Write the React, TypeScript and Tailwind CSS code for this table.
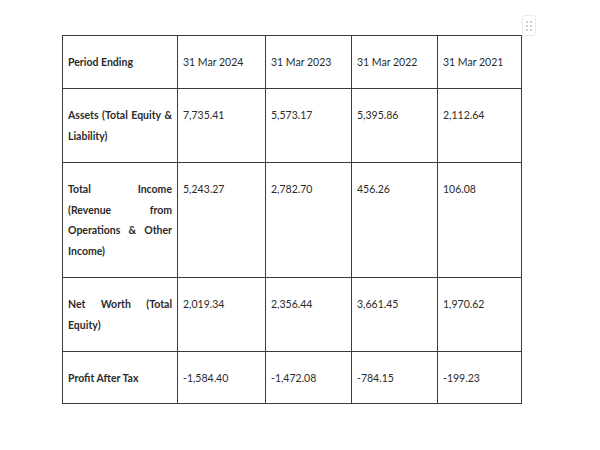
import React from "react";

type Row = { label: string; values: string[]; h: string };

const rows: Row[] = [
  { label: "Assets (Total Equity & Liability)", values: ["7,735.41", "5,573.17", "5,395.86", "2,112.64"], h: "h-[74px]" },
  {
    label: "Total Income (Revenue from Operations & Other Income)",
    values: ["5,243.27", "2,782.70", "456.26", "106.08"],
    h: "h-[115px]",
  },
  { label: "Net Worth (Total Equity)", values: ["2,019.34", "2,356.44", "3,661.45", "1,970.62"], h: "h-[74px]" },
  { label: "Profit After Tax", values: ["-1,584.40", "-1,472.08", "-784.15", "-199.23"], h: "h-[52px]" },
];

const headers = ["31 Mar 2024", "31 Mar 2023", "31 Mar 2022", "31 Mar 2021"];

function DragHandle() {
  return (
    <div className="absolute left-[522px] top-[15px] grid h-[21px] w-[14px] place-items-center rounded-[3px] border border-[#ececec] bg-white">
      <div className="grid grid-cols-2 gap-x-[2px] gap-y-[2px]">
        {Array.from({ length: 6 }).map((_, i) => (
          <span key={i} className="block h-[2px] w-[2px] rounded-full bg-[#bdbdbd]" />
        ))}
      </div>
    </div>
  );
}

export default function App() {
  const cell = "border border-[#3c3c3c] align-top px-[5px] pt-[16px] leading-[20.5px]";
  return (
    <div className="relative h-[450px] w-[600px] bg-white pl-[62px] pt-[35px] font-['Lato',sans-serif] text-[10.5px] text-[#2b2b2b]">
      <DragHandle />
      <table className="table-fixed border-collapse">
        <colgroup>
          <col className="w-[115px]" />
          <col className="w-[88px]" />
          <col className="w-[86px]" />
          <col className="w-[86px]" />
          <col className="w-[84px]" />
        </colgroup>
        <tbody>
          <tr className="h-[53px]">
            <td className={`${cell} font-bold`}>Period Ending</td>
            {headers.map((h) => (
              <td key={h} className={cell}>
                {h}
              </td>
            ))}
          </tr>
          {rows.map((r) => (
            <tr key={r.label} className={r.h}>
              <td className={`${cell} text-justify font-bold`}>{r.label}</td>
              {r.values.map((v, i) => (
                <td key={i} className={cell}>
                  {v}
                </td>
              ))}
            </tr>
          ))}
        </tbody>
      </table>
    </div>
  );
}
